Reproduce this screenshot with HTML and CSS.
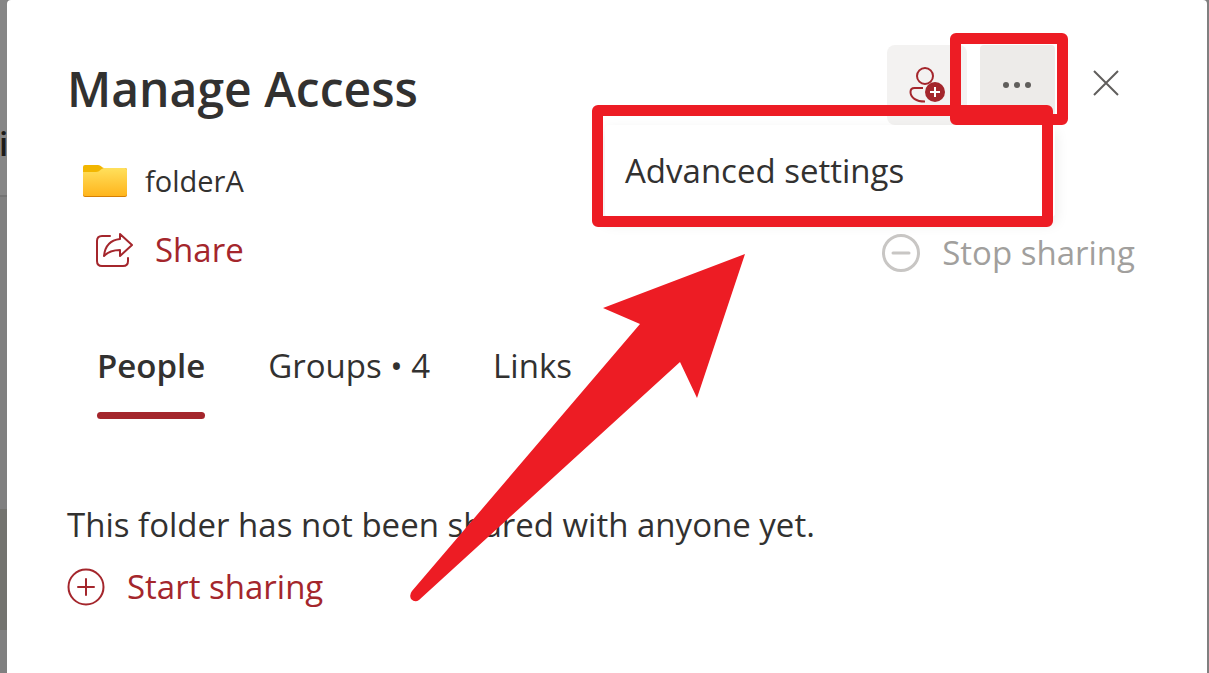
FILE: index.html
```html
<!DOCTYPE html>
<html lang="en">
<head>
    <meta charset="UTF-8">
    <meta name="viewport" content="width=device-width, initial-scale=1.0">
    <title>Manage Access</title>
    <link rel="stylesheet" href="styles.css">
</head>
<body>
    <!-- Dimmed page behind the dialog -->
    <div class="backdrop">
        <div class="backdrop-head">i</div>
        <div class="backdrop-row"></div>
    </div>

    <main class="dialog">
        <!-- Header -->
        <header class="header">
            <h1>Manage Access</h1>
            <div class="header-actions">
                <button class="icon-btn grant-btn" aria-label="Grant access">
                    <svg width="38" height="38" viewBox="0 0 38 38" fill="none">
                        <circle cx="17" cy="10" r="8" stroke="#a4262c" stroke-width="2"/>
                        <path d="M15 22H6.500C4 22 2.500 23.500 2.500 26C2.500 31.500 8 35.500 17 35.500" stroke="#a4262c" stroke-width="2"/>
                        <circle cx="27" cy="26" r="10" fill="#a4262c"/>
                        <path d="M27 21V31M22 26H32" stroke="#fff" stroke-width="2"/>
                    </svg>
                </button>
                <div class="more">
                    <button class="icon-btn more-btn" aria-label="More options">
                        <svg width="30" height="8" viewBox="0 0 30 8" fill="#605e5c">
                            <circle cx="3" cy="4" r="3"/>
                            <circle cx="14" cy="4" r="3"/>
                            <circle cx="25" cy="4" r="3"/>
                        </svg>
                    </button>
                    <div class="menu">
                        <button class="menu-item">Advanced settings</button>
                        <span class="callout menu-callout"></span>
                    </div>
                    <span class="callout more-callout"></span>
                </div>
                <button class="icon-btn close-btn" aria-label="Close">
                    <svg width="26" height="26" viewBox="0 0 26 26" fill="none" stroke="#605e5c" stroke-width="2">
                        <path d="M1 1L25 25M25 1L1 25"/>
                    </svg>
                </button>
            </div>
        </header>

        <!-- Folder name -->
        <div class="folder">
            <svg width="44" height="32" viewBox="0 0 44 32">
                <defs>
                    <linearGradient id="folderFill" x1="0" y1="0" x2="0" y2="1">
                        <stop offset="0" stop-color="#ffe05c"/>
                        <stop offset="1" stop-color="#ffb51d"/>
                    </linearGradient>
                </defs>
                <path d="M0 2Q0 0 2 0H15C18 0 19 3 21 3V10H0Z" fill="#f2b600"/>
                <path d="M0 8H13C17 8 18 3 21 3H42Q44 3 44 5V30Q44 32 42 32H2Q0 32 0 30Z" fill="#d67f05"/>
                <path d="M0 7H13C17 7 18 3 21 3H42Q44 3 44 5V29Q44 31 42 31H2Q0 31 0 29Z" fill="url(#folderFill)"/>
            </svg>
            <span>folderA</span>
        </div>

        <!-- Commands -->
        <div class="commands">
            <button class="link-btn share-btn">
                <svg width="38" height="36" viewBox="0 0 38 36" fill="none" stroke="#a4262c" stroke-width="2" stroke-linejoin="round" stroke-linecap="round">
                    <path d="M15 4H7Q2 4 2 9V29Q2 34 7 34H28Q33 34 33 29V26"/>
                    <path d="M25 2L37 13L25 24V18C17 18 13 20 9 24C10 14 16 8 25 7Z"/>
                </svg>
                Share
            </button>
            <button class="link-btn stop-btn" disabled>
                <svg width="38" height="38" viewBox="0 0 38 38" fill="none" stroke="#c8c6c4" stroke-width="3" stroke-linecap="round">
                    <circle cx="19" cy="19" r="17.500"/>
                    <path d="M11 19H27"/>
                </svg>
                Stop sharing
            </button>
        </div>

        <!-- Tabs -->
        <div class="tabs" role="tablist">
            <button class="tab active" role="tab" aria-selected="true">People</button>
            <button class="tab" role="tab" aria-selected="false">Groups • 4</button>
            <button class="tab" role="tab" aria-selected="false">Links</button>
        </div>

        <p class="message">This folder has not been shared with anyone yet.</p>
        <button class="link-btn start-btn">
            <svg width="38" height="38" viewBox="0 0 38 38" fill="none" stroke="#a4262c" stroke-width="2" stroke-linecap="round">
                <circle cx="19" cy="19" r="17.500"/>
                <path d="M19 11V27M11 19H27"/>
            </svg>
            Start sharing
        </button>
    </main>

    <!-- Arrow pointing at the menu -->
    <svg class="arrow" width="336" height="348" viewBox="0 0 336 348">
        <path d="M335 0L287 144L270 108L9 346Q5 349 1 345Q-1 341 2 337L230 70L193 54Z" fill="#ed1c24"/>
    </svg>
</body>
</html>
```
FILE: styles.css
```css
* {
    box-sizing: border-box;
}
body {
    margin: 0;
    min-height: 100vh;
    display: grid;
    grid-template-columns: 7px 1fr 2px;
    background: #808080;
    color: #323130;
    font-family: "Segoe UI", "Open Sans", sans-serif;
    font-size: 33px;
    line-height: 48px;
    overflow: hidden;
}
button {
    font: inherit;
    color: inherit;
    background: none;
    border: none;
    padding: 0;
    cursor: pointer;
}
svg {
    display: block;
    flex-shrink: 0;
}

/* Backdrop */
.backdrop {
    overflow: hidden;
    background: #808080;
}
.backdrop-head {
    height: 197px;
    padding-top: 120px;
    border-bottom: 2px solid #747474;
    background: #868686;
    color: #1b1a19;
    font-weight: 600;
    display: flex;
    justify-content: center;
}
.backdrop-row {
    height: 121px;
    margin-top: 312px;
    background: #73736f;
}

/* Dialog */
.dialog {
    background: #fff;
    border-radius: 4px 4px 0 0;
    padding: 45px 60px 0;
}
.header {
    display: flex;
    align-items: center;
    justify-content: space-between;
    padding-right: 3px;
}
.header h1 {
    margin: 8px 0 0;
    font-size: 48px;
    line-height: 64px;
    font-weight: 600;
}
.header-actions {
    display: flex;
    gap: 13px;
}
.icon-btn {
    display: flex;
    align-items: center;
    justify-content: center;
    height: 80px;
    border-radius: 8px;
}
.grant-btn {
    width: 80px;
    background: #f3f2f1;
}
.more {
    position: relative;
}
.more-btn {
    width: 75px;
    border-radius: 4px;
    background: #edebe9;
}
.close-btn {
    width: 76px;
    padding-bottom: 4px;
}

/* Menu */
.menu {
    position: absolute;
    top: 100%;
    right: 0;
    width: 450px;
    padding: 0 20px;
    background: #fff;
    border-radius: 4px;
    box-shadow: 0 6px 14px rgba(0, 0, 0, 0.1);
}
.menu-item {
    display: block;
    width: 100%;
    height: 92px;
    text-align: left;
}

/* Red markers */
.callout {
    position: absolute;
    border: 11px solid #ed1c24;
    border-radius: 6px;
    pointer-events: none;
}
.more-callout {
    inset: -12px -13px 0 -30px;
}
.menu-callout {
    inset: -20px 2px -10px -13px;
}
.arrow {
    position: absolute;
    left: 410px;
    top: 254px;
}

/* Folder and commands */
.folder {
    display: flex;
    align-items: center;
    gap: 18px;
    margin-top: 32px;
    padding-left: 16px;
    font-size: 29px;
}
.commands {
    display: flex;
    align-items: flex-start;
    justify-content: space-between;
    margin-top: 21px;
    padding: 0 12px 0 28px;
}
.link-btn {
    display: flex;
    align-items: center;
    gap: 22px;
    color: #a4262c;
}
.stop-btn {
    margin-top: 3px;
    color: #a19f9d;
    cursor: default;
}

/* Tabs */
.tabs {
    display: flex;
    gap: 63px;
    margin-top: 65px;
    padding-left: 30px;
}
.tab::after {
    content: "";
    display: block;
    height: 7px;
    margin-top: 22px;
    border-radius: 4px;
}
.tab.active {
    font-weight: 600;
}
.tab.active::after {
    background: #a4262c;
}

.message {
    margin: 82px 0 14px;
}
```
